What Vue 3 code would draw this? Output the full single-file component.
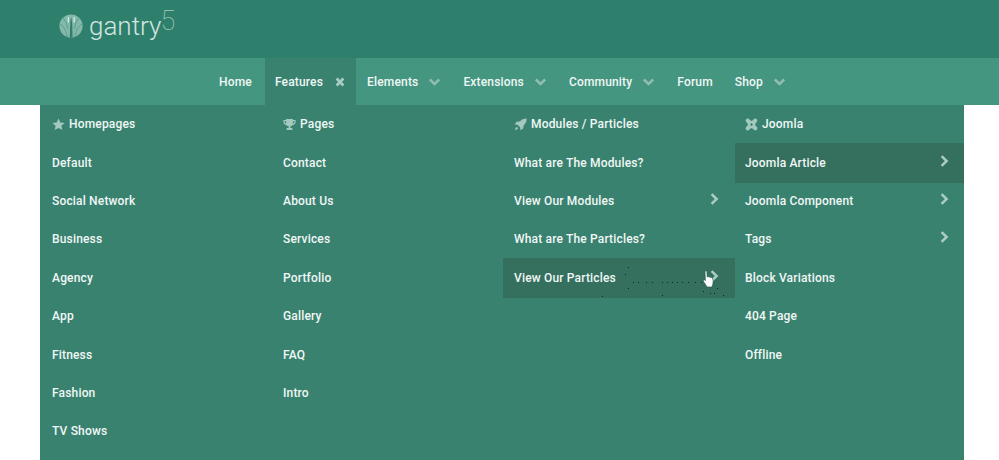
<template>
  <div class="page">
    <header class="top">
      <div class="logo">
        <svg class="logo-mark" width="24" height="24" viewBox="0 0 24 24">
          <circle cx="12" cy="12" r="11.6" fill="#83b8aa" />
          <path d="M0.8 10 Q6 12 8.4 23 M23.2 10 Q18 12 15.8 23 M4 4 Q8 8 8.8 15 M20 4 Q16 8 15.4 15" stroke="#5d9f8e" stroke-width="1" fill="none" />
          <path d="M10.8 23.6 L11.2 10 Q11.4 6 12.2 3 Q13 6.5 13.2 10 L13.6 23.6 Z" fill="#2f7f6d" />
          <path d="M9.4 3 V8.5 M15.2 3 V8.5" stroke="#d9ebe6" stroke-width="1.2" />
        </svg>
        <span class="logo-word">gantry<em>5</em></span>
      </div>
    </header>

    <nav class="nav">
      <a
        v-for="item in navItems"
        :key="item.label"
        class="nav-item"
        :class="{ 'nav-item--active': item.active, 'nav-item--sub': item.sub }"
      >
        <span>{{ item.label }}</span>
        <svg v-if="item.active" class="nav-icon" width="10" height="10" viewBox="0 0 10 10">
          <path d="M1.6 1.6 L8.4 8.4 M8.4 1.6 L1.6 8.4" stroke="#a9cdc3" stroke-width="2.8" />
        </svg>
        <svg v-else-if="item.sub" class="nav-icon" width="11" height="8" viewBox="0 0 11 8">
          <path d="M0.8 1.4 L5.5 6 L10.2 1.4" stroke="#8fbdb0" stroke-width="2.6" fill="none" />
        </svg>
      </a>
    </nav>

    <main class="panel">
      <section v-for="col in columns" :key="col.title" class="col">
        <div class="col-head">
          <svg class="col-icon" width="13" height="13" viewBox="0 0 13 13">
            <path :d="col.icon" fill="#a3c8be" fill-rule="evenodd" />
          </svg>
          <span>{{ col.title }}</span>
        </div>
        <a
          v-for="row in col.rows"
          :key="row.label"
          class="row"
          :class="{ 'row--hover': row.hover }"
        >
          <span>{{ row.label }}</span>
          <svg v-if="row.sub" class="row-arrow" width="9" height="12" viewBox="0 0 9 12">
            <path d="M1.6 1.2 L6.6 6 L1.6 10.8" stroke="#a9cdc3" stroke-width="2.5" fill="none" />
          </svg>
          <svg v-if="row.cursor" class="specks" width="232" height="40" viewBox="0 0 232 40">
            <rect v-for="s in specks" :key="s[0] + '-' + s[1]" :x="s[0]" :y="s[1]" width="1" height="1" fill="#12261f" />
          </svg>
          <svg v-if="row.cursor" class="cursor" width="14" height="20" viewBox="0 0 15 20">
            <path
              d="M3.2 1.6 Q4.4 0.6 5.2 1.8 L5.6 8 L6.6 7 L7.4 8.2 L8.4 7.4 L9.2 8.6 L10.2 8.2 Q11.8 9.4 12 12 Q12 16 10.6 18.6 L5.4 18.6 Q3.6 15.4 1.4 12.4 Q1 11 2.4 10.8 L3.6 11.8 Z"
              fill="#ffffff"
              stroke="#24594d"
              stroke-width="0.7"
            />
          </svg>
        </a>
      </section>
    </main>
  </div>
</template>

<script setup>
const navItems = [
  { label: 'Home' },
  { label: 'Features', active: true },
  { label: 'Elements', sub: true },
  { label: 'Extensions', sub: true },
  { label: 'Community', sub: true },
  { label: 'Forum' },
  { label: 'Shop', sub: true },
]

// stray gif pixels over the hovered row
const specks = [
  [125, 8], [122, 15], [130, 23], [135, 23], [143, 23], [149, 23], [159, 23], [164, 23],
  [169, 23], [174, 23], [179, 23], [185, 23], [192, 23], [198, 23], [125, 29], [159, 36],
  [99, 37], [200, 32], [207, 34], [211, 34], [214, 29], [220, 36],
]

const star = 'M6.5 0.6 L8.3 4.4 L12.6 4.9 L9.4 7.8 L10.3 12 L6.5 9.9 L2.7 12 L3.6 7.8 L0.4 4.9 L4.7 4.4 Z'
const trophy =
  'M3 1 H10 V2 H12.6 V4 Q12.4 6.6 9.4 7.2 Q8.6 8 7.4 8.3 V10 H9.4 V12 H3.6 V10 H5.6 V8.3 Q4.4 8 3.6 7.2 Q0.6 6.6 0.4 4 V2 H3 Z M1.6 3.2 V4 Q1.8 5.3 3.2 5.8 L3 3.2 Z M11.4 3.2 H10 L9.8 5.8 Q11.2 5.3 11.4 4 Z'
const rocket =
  'M12.6 0.4 Q12.8 4.6 9.6 7.4 L9.2 10.4 L6.4 12.2 L6.2 9.4 L3.6 6.8 L0.8 6.6 L2.6 3.8 L5.6 3.4 Q8.4 0.2 12.6 0.4 Z M1.8 9.4 Q3 9 3.8 9.6 Q4.2 10.6 3.4 11.2 L0.8 12 Z'
const joomla =
  'M0.6 2.6 Q0.8 0.6 2.8 0.6 Q4.2 0.6 4.8 2 L6.5 3 L8.2 2 Q8.8 0.6 10.2 0.6 Q12.2 0.6 12.4 2.6 Q12.2 4.2 11 4.8 L10 6.5 L11 8.2 Q12.4 8.8 12.4 10.4 Q12.2 12.4 10.2 12.4 Q8.8 12.2 8.2 11 L6.5 10 L4.8 11 Q4.2 12.4 2.8 12.4 Q0.8 12.2 0.6 10.4 Q0.8 8.8 2 8.2 L3 6.5 L2 4.8 Q0.8 4.2 0.6 2.6 Z M6.5 5 L5 6.5 L6.5 8 L8 6.5 Z'

const columns = [
  {
    title: 'Homepages',
    icon: star,
    rows: [
      { label: 'Default' },
      { label: 'Social Network' },
      { label: 'Business' },
      { label: 'Agency' },
      { label: 'App' },
      { label: 'Fitness' },
      { label: 'Fashion' },
      { label: 'TV Shows' },
    ],
  },
  {
    title: 'Pages',
    icon: trophy,
    rows: [
      { label: 'Contact' },
      { label: 'About Us' },
      { label: 'Services' },
      { label: 'Portfolio' },
      { label: 'Gallery' },
      { label: 'FAQ' },
      { label: 'Intro' },
    ],
  },
  {
    title: 'Modules / Particles',
    icon: rocket,
    rows: [
      { label: 'What are The Modules?' },
      { label: 'View Our Modules', sub: true },
      { label: 'What are The Particles?' },
      { label: 'View Our Particles', sub: true, hover: true, cursor: true },
    ],
  },
  {
    title: 'Joomla',
    icon: joomla,
    rows: [
      { label: 'Joomla Article', sub: true, hover: true },
      { label: 'Joomla Component', sub: true },
      { label: 'Tags', sub: true },
      { label: 'Block Variations' },
      { label: '404 Page' },
      { label: 'Offline' },
    ],
  },
]
</script>

<style scoped>
.page {
  width: 999px;
  height: 460px;
  overflow: hidden;
  background: #ffffff;
  font-family: Roboto, 'Liberation Sans', sans-serif;
  font-size: 12px;
  font-weight: 500;
  letter-spacing: 0.17px;
  color: #f0f7f5;
}

.top {
  height: 58px;
  background: #2f7f6d;
  padding: 13px 0 0 59px;
  box-sizing: border-box;
}

.logo {
  display: flex;
  align-items: center;
  gap: 6px;
}

.logo-word {
  font-family: Roboto, sans-serif;
  font-size: 26px;
  font-weight: 300;
  line-height: 26px;
  letter-spacing: 0;
  color: #d3e6e0;
}

.logo-word em {
  font-style: normal;
  font-size: 27px;
  font-weight: 100;
  color: #a3cbc0;
  position: relative;
  top: -5px;
  margin-left: -1px;
}

.nav {
  height: 47px;
  background: #459680;
  display: flex;
  align-items: stretch;
  padding-left: 208px;
}

.nav-item {
  display: flex;
  align-items: center;
  gap: 10px;
  padding: 0 11px;
}

.nav-item--sub {
  gap: 11px;
  padding-right: 12px;
}

.nav-item--active {
  background: #3a8270;
  padding: 0 11px 0 10px;
  margin-left: 2px;
  gap: 12px;
}

.panel {
  width: 924px;
  height: 355px;
  margin-left: 40px;
  background: #3a8270;
  display: grid;
  grid-template-columns: 231px 232px 232px 229px;
}

.col {
  --pad: 12px;
}

.col:nth-child(3) {
  --pad: 11px;
}

.col:nth-child(4) {
  --pad: 10px;
}

.col-head,
.row {
  display: flex;
  align-items: center;
  height: 38.4px;
  padding: 0 var(--pad);
}

.col-head {
  gap: 4px;
  height: 38.5px;
}

.col-icon {
  flex: none;
}

.row {
  position: relative;
  justify-content: space-between;
}

.row--hover {
  background: #35705f;
  box-shadow: 0 -1px 0 #35705f, 0 1px 0 #35705f;
}

.row-arrow {
  margin-right: 5px;
  position: relative;
  top: -2px;
}

.specks {
  position: absolute;
  left: 0;
  top: 0;
}

.cursor {
  position: absolute;
  left: 199px;
  top: 10px;
}
</style>
